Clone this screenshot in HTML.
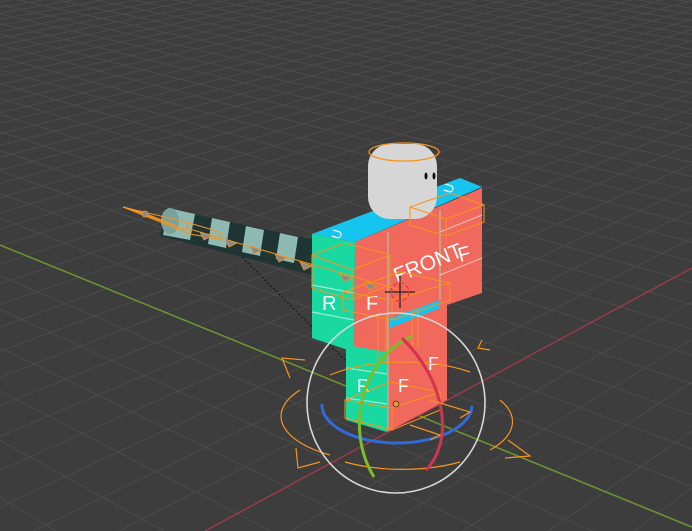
<!DOCTYPE html>
<html><head><meta charset="utf-8"><style>
html,body{margin:0;padding:0;background:#3d3d3d;overflow:hidden;width:692px;height:531px}
svg{display:block;overflow:hidden}
text{font-family:"Liberation Sans",sans-serif;fill:#fff}
</style></head><body>
<svg id="s" width="692" height="531" viewBox="0 0 692 531" xmlns="http://www.w3.org/2000/svg">
<rect width="692" height="531" fill="#3d3d3d"/>
<g id="grid" stroke="#4b4b4b" stroke-width="1"></g>
<line x1="0" y1="245" x2="692" y2="527" stroke="#6f9a2a" stroke-width="1.4"/>
<line x1="205" y1="531" x2="692" y2="268" stroke="#9e3a4a" stroke-width="1.4"/>

<line x1="225" y1="240" x2="345" y2="360" stroke="#111" stroke-width="1" stroke-dasharray="2,2"/>

<g>
<polygon points="165,208 315,240 312,275 160,236" fill="#1f3533"/>
<polygon points="168,208 195,214 190,240 163,235" fill="#8fb9b3"/>
<polygon points="212,218 230,222 226,248 208,244" fill="#8fb9b3"/>
<polygon points="246,226 264,230 260,256 242,252" fill="#8fb9b3"/>
<polygon points="280,233 298,237 294,263 276,259" fill="#8fb9b3"/>
<ellipse cx="170" cy="221" rx="9" ry="13" fill="#7aa19c"/>
</g>

<polygon points="312,234 460,178 482,187 355,242" fill="#16c5ef"/>
<polygon points="355,242 482,188 482,293 447,305 447,400 387,432 387,352 354,352" fill="#f0695c"/>
<polygon points="312,234 355,242 354,352 312,338" fill="#19d9a0"/>
<polygon points="346,345 387,352 387,432 346,420" fill="#19d9a0"/>
<polygon points="390,318 440,300 440,308 390,328" fill="#16c5ef"/>
<g stroke="#ffffff" stroke-opacity="0.55" stroke-width="1.2" fill="none">
<line x1="312" y1="285" x2="354" y2="293"/><line x1="312" y1="312" x2="354" y2="320"/>
<line x1="440" y1="232" x2="482" y2="215"/><line x1="440" y1="275" x2="482" y2="258"/>
<line x1="346" y1="368" x2="387" y2="374"/><line x1="346" y1="398" x2="387" y2="404"/>
</g>
<line x1="388" y1="232" x2="388" y2="430" stroke="#9ad6b0" stroke-width="1"/>
<line x1="440" y1="210" x2="440" y2="300" stroke="#9ad6b0" stroke-width="1"/>
<text x="0" y="0" font-size="21" transform="translate(397,283) rotate(-22)">FRONT</text>
<text x="0" y="0" font-size="20" transform="translate(460,262) rotate(-15)">F</text>
<text x="322" y="310" font-size="20">R</text>
<text x="366" y="310" font-size="20">F</text>
<text x="357" y="392" font-size="18">R</text>
<text x="398" y="392" font-size="18">F</text>
<text x="428" y="370" font-size="18">F</text>
<text x="0" y="0" font-size="13" transform="translate(340,240) rotate(-75)">U</text>
<text x="0" y="0" font-size="13" transform="translate(452,194) rotate(-75)">U</text>

<rect x="368" y="144" width="69" height="75" rx="22" fill="#d6d6d6"/>
<ellipse cx="426" cy="176" rx="1.5" ry="3.5" fill="#111"/>
<ellipse cx="434" cy="176" rx="1.5" ry="3.5" fill="#111"/>
<ellipse cx="404" cy="152" rx="35" ry="9" fill="none" stroke="#f7941d" stroke-width="1.3"/>

<g fill="none" stroke="#f7941d" stroke-width="1">
<polygon points="410,207 450,193 484,205 484,222 446,236 410,225"/>
<line x1="446" y1="236" x2="446" y2="219"/><line x1="410" y1="207" x2="446" y2="219"/><line x1="446" y1="219" x2="484" y2="205"/>
<polygon points="312,255 345,243 390,255 390,285 352,300 312,288"/>
<line x1="352" y1="270" x2="352" y2="300"/><line x1="312" y1="255" x2="352" y2="270"/><line x1="352" y1="270" x2="390" y2="255"/>
<polygon points="343,292 400,272 450,283 450,300 392,320 343,310"/>
<line x1="392" y1="300" x2="392" y2="320"/><line x1="343" y1="292" x2="392" y2="300"/><line x1="392" y1="300" x2="450" y2="283"/>
<polygon points="345,400 390,382 440,392 440,410 392,430 345,418"/>
<line x1="392" y1="408" x2="392" y2="430"/><line x1="345" y1="400" x2="392" y2="408"/><line x1="392" y1="408" x2="440" y2="392"/>
<line x1="378" y1="315" x2="378" y2="362"/><line x1="386" y1="315" x2="386" y2="362"/>
<line x1="412" y1="310" x2="412" y2="350"/><line x1="418" y1="308" x2="418" y2="348"/>
<polygon points="123,207 186,222 190,234"/>
<polygon points="186,222 220,232 223,240 190,234"/>
<polyline points="186,228 400,290"/>
<polygon points="123,207 144,213 186,230" fill="#888" fill-opacity="0.6"/>
</g>
<g fill="#8a8a8a" stroke="#f7941d" stroke-width="0.8">
<polygon points="200,232 212,236 204,240"/><polygon points="225,239 237,243 229,247"/>
<polygon points="250,246 262,250 254,254"/><polygon points="275,254 287,258 279,262"/>
<polygon points="300,262 312,266 304,270"/><polygon points="340,274 352,278 344,282"/>
<polygon points="365,282 377,286 369,290"/><circle cx="145" cy="214" r="3"/>
</g>
<g stroke="#222" stroke-width="1.2"><line x1="400" y1="276" x2="400" y2="308"/><line x1="385" y1="292" x2="415" y2="292"/></g>
<circle cx="400" cy="292" r="9" fill="none" stroke="#ff3030" stroke-width="1.3" stroke-dasharray="4,3"/>

<g fill="none" stroke="#f7941d" stroke-width="1.2">
<path d="M300,390 A106,46 0 0 0 330,455"/>
<path d="M345,462 A106,46 0 0 0 460,462"/>
<path d="M490,450 A106,46 0 0 0 500,400"/>
<path d="M330,375 A106,46 0 0 1 470,372"/>
</g>
<ellipse cx="396" cy="403" rx="89" ry="90" fill="none" stroke="#d8d8d8" stroke-width="1.6"/>
<path d="M322,404 A75,38 0 0 0 472,406" fill="none" stroke="#2f6bdc" stroke-width="3"/>
<path d="M374,477 C345,430 360,360 412,336" fill="none" stroke="#7bbd2a" stroke-width="3"/>
<path d="M426,470 C455,440 445,380 402,338" fill="none" stroke="#d2344d" stroke-width="3"/>
<g fill="none" stroke="#f7941d" stroke-width="1.2">
<polyline points="305,360 282,358 290,378"/><polyline points="296,448 298,468 320,462"/>
<polyline points="508,440 530,456 505,458"/><polyline points="490,350 478,348 482,340"/>
<polyline points="410,425 440,435 430,440"/><polyline points="430,400 470,412 460,418"/>
</g>
<circle cx="396" cy="404" r="3" fill="#f7941d" stroke="#333" stroke-width="0.8"/>
</svg>
<script>
(function(){
var g=document.getElementById('grid'),ns='http://www.w3.org/2000/svg';
var O=[418,416],VR=[1744,-300],VG=[-1336,-300],a=0.03,b=0.024;
function P(u,v){var w=1+u*a+v*b;return [(O[0]+u*a*VR[0]+v*b*VG[0])/w,(O[1]+u*a*VR[1]+v*b*VG[1])/w];}
function L(p,q){var l=document.createElementNS(ns,'line');l.setAttribute('x1',p[0]);l.setAttribute('y1',p[1]);l.setAttribute('x2',q[0]);l.setAttribute('y2',q[1]);g.appendChild(l);}
var ww=0.08;
for(var k=-40;k<=120;k++){
 var vmin=(ww-1-k*a)/b; L(P(k,vmin),P(k,400));
 var umin=(ww-1-k*b)/a; L(P(umin,k),P(400,k));
}
})();
</script>
</body></html>
